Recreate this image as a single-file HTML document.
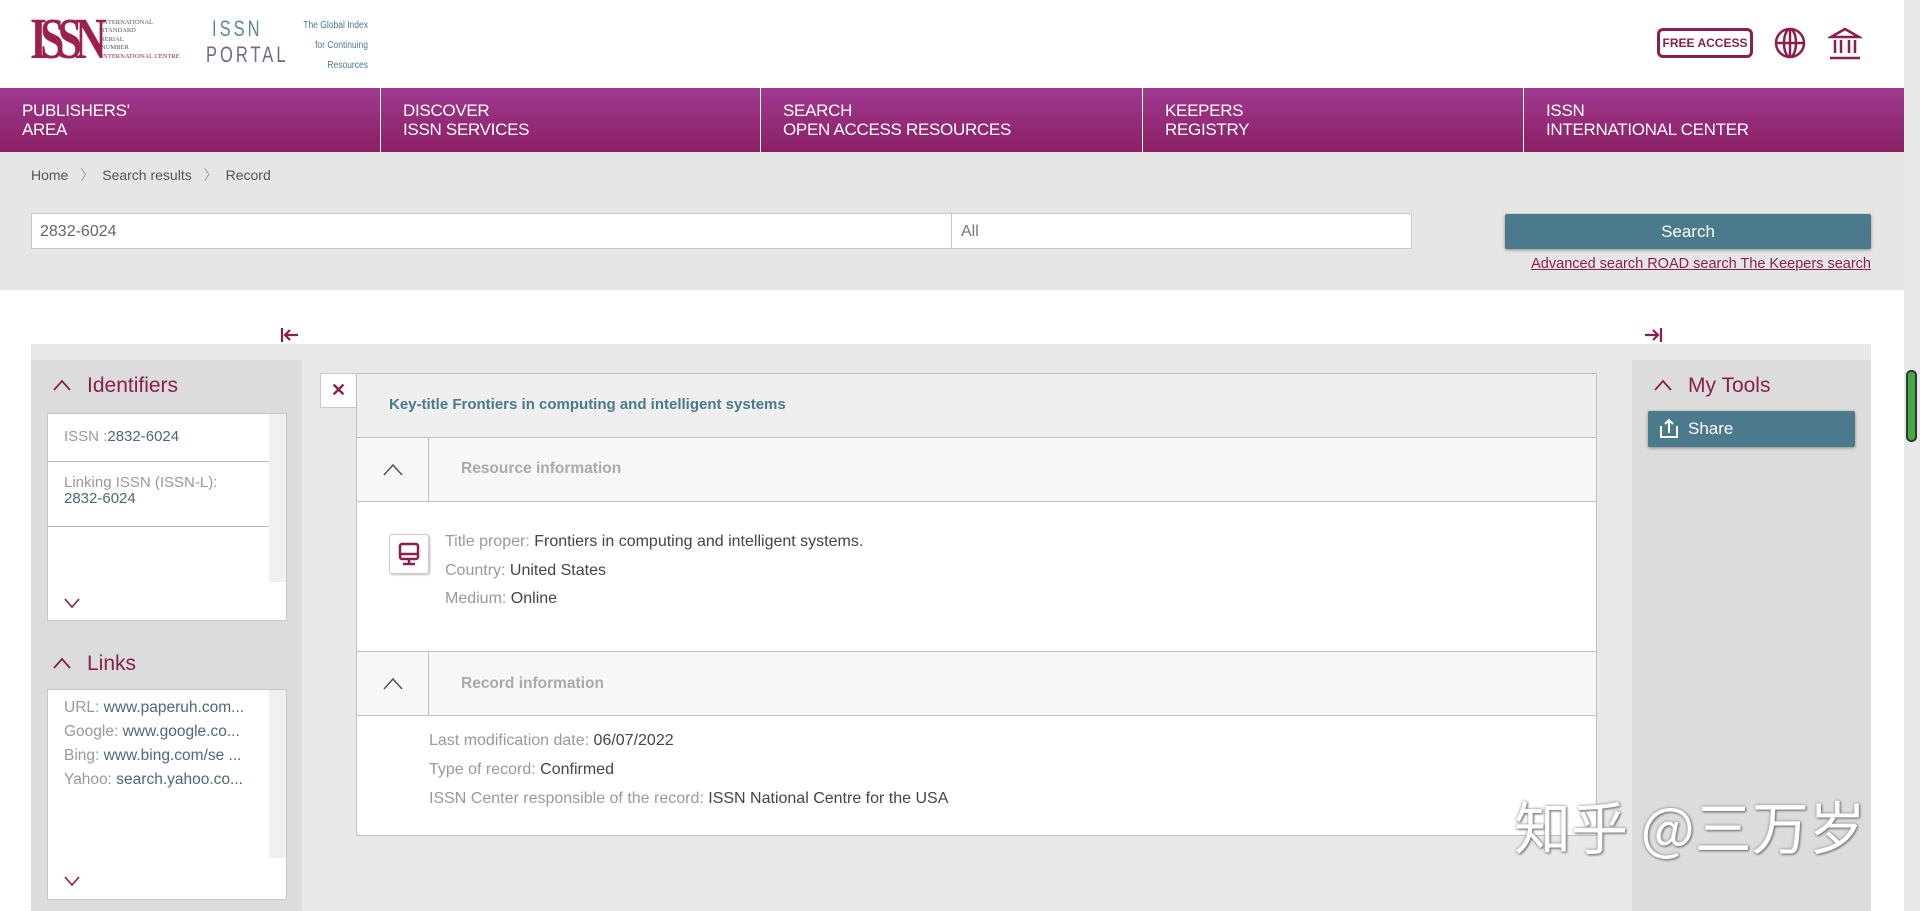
<!DOCTYPE html>
<html><head><meta charset="utf-8"><style>
*{box-sizing:border-box;margin:0;padding:0}
body{width:1920px;height:911px;overflow:hidden;background:#fff;font-family:"Liberation Sans",Arial,sans-serif;position:relative;color:#444}
.a{position:absolute}
.nav{left:0;top:88px;width:1904px;height:64px;background:linear-gradient(#a03a92,#8a1f63)}
.nav div{position:absolute;top:0;height:64px;color:#fff;font-size:17px;line-height:19px;padding:13px 0 0 22px;border-left:1px solid #fff;letter-spacing:-0.3px}
.lbl{color:#999}
.box{background:#fff;border:1px solid #c8c8c8}
.hd{position:absolute;font-size:21px;color:#8a1f4f}
.hd svg{position:absolute;left:-34px;top:5px}
</style></head><body>
<div class="a" style="left:30px;top:16px;width:64px;height:46px;font:bold 58px/46px 'Liberation Serif',serif;color:#9c1f4f;letter-spacing:-9px;transform:scaleX(0.75);transform-origin:left">ISSN</div>
<div class="a" style="left:101px;top:19px;font:6.5px/8.4px 'Liberation Serif',serif;color:#555">INTERNATIONAL<br>STANDARD<br>SERIAL<br>NUMBER<br><span style="color:#9c1f4f">INTERNATIONAL CENTRE</span></div>
<div class="a" style="left:212px;top:16px;font:22px/26px 'Liberation Sans',sans-serif;color:#5a8a9a;letter-spacing:4px;transform:scaleX(0.75);transform-origin:left">ISSN<br><span style="margin-left:-8px;color:#6a6a8a">PORTAL</span></div>
<div class="a" style="left:282px;top:16px;font:10px/20px 'Liberation Sans',sans-serif;color:#4a7a8c;text-align:right;width:86px;transform:scaleX(0.85);transform-origin:right">The Global Index<br>for Continuing<br>Resources</div>
<div class="a" style="left:1657px;top:28px;width:96px;height:30px;border:3px solid #8a1f4f;border-radius:6px;color:#8a1f4f;font:bold 12px/24px 'Liberation Sans';text-align:center">FREE ACCESS</div>
<svg class="a" style="left:1774px;top:27px" width="32" height="32" viewBox="0 0 32 32" fill="none" stroke="#8a1f4f" stroke-width="2.5"><circle cx="16" cy="16" r="14"/><ellipse cx="16" cy="16" rx="6" ry="14"/><line x1="2" y1="16" x2="30" y2="16"/><line x1="16" y1="2" x2="16" y2="30"/></svg>
<svg class="a" style="left:1828px;top:26px" width="34" height="34" viewBox="0 0 34 34" fill="none" stroke="#8a1f4f" stroke-width="2.5"><path d="M3 11 L17 3 L31 11 Z"/><line x1="7" y1="14" x2="7" y2="27"/><line x1="13" y1="14" x2="13" y2="27"/><line x1="21" y1="14" x2="21" y2="27"/><line x1="27" y1="14" x2="27" y2="27"/><line x1="2" y1="32" x2="32" y2="32"/></svg>
<div class="a nav">
<div style="left:0;border:none">PUBLISHERS'<br>AREA</div>
<div style="left:380px">DISCOVER<br>ISSN SERVICES</div>
<div style="left:760px">SEARCH<br>OPEN ACCESS RESOURCES</div>
<div style="left:1142px">KEEPERS<br>REGISTRY</div>
<div style="left:1523px">ISSN<br>INTERNATIONAL CENTER</div>
</div>
<div class="a" style="left:0;top:152px;width:1904px;height:138px;background:#e6e6e6"></div>
<div class="a" style="left:31px;top:165px;font-size:14px;color:#555">Home <span style="color:#999;margin:0 8px">&#x3009;</span>Search results <span style="color:#999;margin:0 8px">&#x3009;</span>Record</div>
<div class="a box" style="left:31px;top:213px;width:921px;height:36px;font-size:16px;color:#666;padding:9px 8px">2832-6024</div>
<div class="a box" style="left:951px;top:213px;width:461px;height:36px;font-size:16px;color:#777;padding:9px 9px">All</div>
<div class="a" style="left:1505px;top:214px;width:366px;height:35px;background:#4a7a8c;color:#fff;font-size:17px;text-align:center;line-height:35px;border-radius:2px;box-shadow:0 1px 3px #888">Search</div>
<div class="a" style="right:49px;top:256px;font-size:14.5px;color:#8a1f4f;text-decoration:underline">Advanced search ROAD search The Keepers search</div>
<svg class="a" style="left:280px;top:326px" width="20" height="18" viewBox="0 0 20 18" fill="none" stroke="#8a1f4f" stroke-width="2.2"><line x1="2" y1="2" x2="2" y2="16"/><path d="M18 9 H5 M10 4 L5 9 L10 14"/></svg>
<svg class="a" style="left:1643px;top:326px" width="20" height="18" viewBox="0 0 20 18" fill="none" stroke="#8a1f4f" stroke-width="2.2"><line x1="18" y1="2" x2="18" y2="16"/><path d="M2 9 H15 M10 4 L15 9 L10 14"/></svg>
<div class="a" style="left:31px;top:344px;width:1840px;height:567px;background:#e8e8e8"></div>
<div class="a" style="left:31px;top:360px;width:271px;height:551px;background:#dcdcdc"></div>
<div class="hd" style="left:87px;top:374px"><svg width="18" height="12" viewBox="0 0 18 12" fill="none" stroke="#8a1f4f" stroke-width="1.8"><path d="M1 11 L9 2 L17 11"/></svg>Identifiers</div>
<div class="a box" style="left:47px;top:413px;width:240px;height:208px">
<div style="height:48px;border-bottom:1px solid #bbb;width:222px;padding:14px 16px;font-size:15px"><span class="lbl">ISSN :</span><span style="color:#4a6a7a">2832-6024</span></div>
<div style="height:65px;border-bottom:1px solid #bbb;width:222px;padding:13px 16px;font-size:15px;line-height:16px"><span class="lbl">Linking ISSN (ISSN-L):</span><br><span style="color:#4a6a7a">2832-6024</span></div>
<div class="a" style="right:0;top:0;width:17px;height:168px;background:#f0f0f0"></div>
<svg class="a" style="left:16px;top:184px" width="16" height="11" viewBox="0 0 16 11" fill="none" stroke="#8a1f4f" stroke-width="1.6"><path d="M1 1 L8 9 L15 1"/></svg></div>
<div class="hd" style="left:87px;top:652px"><svg width="18" height="12" viewBox="0 0 18 12" fill="none" stroke="#8a1f4f" stroke-width="1.8"><path d="M1 11 L9 2 L17 11"/></svg>Links</div>
<div class="a box" style="left:47px;top:689px;width:240px;height:211px;padding:6px 16px;font-size:15.5px;line-height:24px;color:#4a6a7a">
<div class="a" style="right:0;top:0;width:17px;height:168px;background:#f0f0f0"></div>
<span class="lbl">URL:</span> www.paperuh.com...<br><span class="lbl">Google:</span> www.google.co...<br><span class="lbl">Bing:</span> www.bing.com/se ...<br><span class="lbl">Yahoo:</span> search.yahoo.co...
<svg class="a" style="left:16px;top:186px" width="16" height="11" viewBox="0 0 16 11" fill="none" stroke="#8a1f4f" stroke-width="1.6"><path d="M1 1 L8 9 L15 1"/></svg></div>
<div class="a box" style="left:320px;top:373px;width:37px;height:35px;color:#8a1f4f;font-size:18px;text-align:center;line-height:33px;font-weight:bold">&#x2715;</div>
<div class="a" style="left:356px;top:373px;width:1241px;height:463px;background:#fff;border:1px solid #c0c0c0">
<div style="height:64px;background:#efefef;border-bottom:1px solid #c0c0c0;padding:22px 32px;font-size:15px;font-weight:bold;color:#4a7a8c">Key-title Frontiers in computing and intelligent systems</div>
<div style="height:64px;background:#f7f7f7;border-bottom:1px solid #c0c0c0;position:relative">
<div class="a" style="left:0;top:0;width:72px;height:63px;border-right:1px solid #c0c0c0"><svg style="position:absolute;left:26px;top:25px" width="20" height="13" viewBox="0 0 20 13" fill="none" stroke="#555" stroke-width="1.5"><path d="M1 12 L10 2 L19 12"/></svg></div>
<div class="a" style="left:104px;top:22px;font-size:15.5px;font-weight:bold;color:#aaa">Resource information</div></div>
<div style="height:150px;border-bottom:1px solid #c0c0c0;position:relative">
<div class="a" style="left:32px;top:32px;width:40px;height:40px;border:1px solid #ccc;border-radius:3px;box-shadow:1px 1px 2px #bbb">
<svg width="38" height="38" viewBox="0 0 38 38" fill="none" stroke="#8a1f4f" stroke-width="2.5"><rect x="10" y="9" width="18" height="15" rx="2"/><line x1="10" y1="19" x2="28" y2="19"/><line x1="19" y1="24" x2="19" y2="28"/><line x1="13" y1="29" x2="25" y2="29"/></svg></div>
<div class="a" style="left:88px;top:26px;font-size:16px;line-height:28.5px"><span class="lbl">Title proper:</span> Frontiers in computing and intelligent systems.<br><span class="lbl">Country:</span> United States<br><span class="lbl">Medium:</span> Online</div></div>
<div style="height:64px;background:#f7f7f7;border-bottom:1px solid #c0c0c0;position:relative">
<div class="a" style="left:0;top:0;width:72px;height:63px;border-right:1px solid #c0c0c0"><svg style="position:absolute;left:26px;top:25px" width="20" height="13" viewBox="0 0 20 13" fill="none" stroke="#555" stroke-width="1.5"><path d="M1 12 L10 2 L19 12"/></svg></div>
<div class="a" style="left:104px;top:23px;font-size:15.5px;font-weight:bold;color:#aaa">Record information</div></div>
<div style="position:relative;padding:10px 72px;font-size:16px;line-height:29px"><span class="lbl">Last modification date:</span> 06/07/2022<br><span class="lbl">Type of record:</span> Confirmed<br><span class="lbl">ISSN Center responsible of the record:</span> ISSN National Centre for the USA</div>
</div>
<div class="a" style="left:1632px;top:360px;width:239px;height:551px;background:#dcdcdc"></div>
<div class="hd" style="left:1688px;top:374px"><svg width="18" height="12" viewBox="0 0 18 12" fill="none" stroke="#8a1f4f" stroke-width="1.8"><path d="M1 11 L9 2 L17 11"/></svg>My Tools</div>
<div class="a" style="left:1648px;top:411px;width:207px;height:36px;background:#4a7a8c;color:#fff;font-size:17px;line-height:36px;padding-left:12px;border-radius:2px;box-shadow:0 1px 3px #888">
<svg style="vertical-align:-4px;margin-right:10px" width="18" height="20" viewBox="0 0 18 20" fill="none" stroke="#fff" stroke-width="2"><path d="M1 8 V19 H17 V8"/><path d="M9 15 V2 M5 6 L9 2 L13 6"/></svg>Share</div>
<div class="a" style="left:1514px;top:795px;font:57px/60px 'Noto Sans CJK SC',sans-serif;color:#fff;text-shadow:0 0 3px #888,1px 1px 2px #666;white-space:nowrap">知乎 @三万岁</div>
<div class="a" style="left:1904px;top:0;width:16px;height:911px;background:#e8e8e8"></div>
<div class="a" style="left:1906px;top:370px;width:11px;height:72px;background:#4a4;border-radius:5px;border:2px solid #333"></div>
</body></html>
